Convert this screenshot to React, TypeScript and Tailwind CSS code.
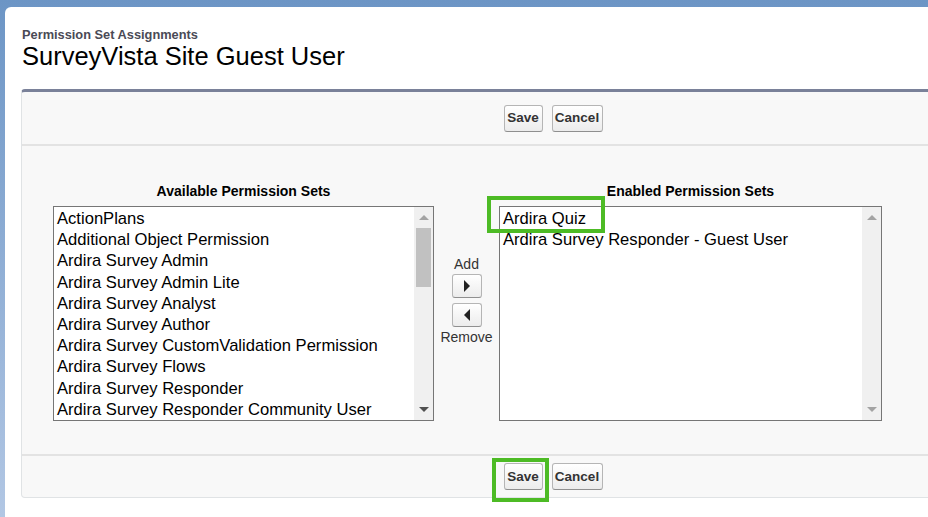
import React from "react";

const available = [
  "ActionPlans",
  "Additional Object Permission",
  "Ardira Survey Admin",
  "Ardira Survey Admin Lite",
  "Ardira Survey Analyst",
  "Ardira Survey Author",
  "Ardira Survey CustomValidation Permission",
  "Ardira Survey Flows",
  "Ardira Survey Responder",
  "Ardira Survey Responder Community User",
];

const enabled = ["Ardira Quiz", "Ardira Survey Responder - Guest User"];

function Btn({ label, w }: { label: string; w: string }) {
  return (
    <button
      className={`${w} h-[27px] rounded-[3px] border border-[#b5b5b5] border-b-[#8f8f8f] bg-gradient-to-b from-[#ffffff] to-[#ececec] text-[13.5px] font-bold text-[#333] leading-none`}
    >
      {label}
    </button>
  );
}

function ArrowUp({ color }: { color: string }) {
  return (
    <div
      className={`w-0 h-0 border-l-[5px] border-r-[5px] border-b-[5px] border-l-transparent border-r-transparent ${color}`}
    />
  );
}

function ArrowDown({ color }: { color: string }) {
  return (
    <div
      className={`w-0 h-0 border-l-[5px] border-r-[5px] border-t-[5px] border-l-transparent border-r-transparent ${color}`}
    />
  );
}

function ListBox({
  items,
  width,
  thumb,
}: {
  items: string[];
  width: string;
  thumb: boolean;
}) {
  return (
    <div
      className={`${width} h-[215px] bg-white border border-[#767676] flex`}
    >
      <ul className="flex-1 pl-[3px] pt-[1px] text-[16.6px] leading-[21.2px] text-black whitespace-nowrap overflow-hidden">
        {items.map((it) => (
          <li key={it}>{it}</li>
        ))}
      </ul>
      {/* fake scrollbar */}
      <div className="w-[19px] h-full bg-[#f0f0f0] flex flex-col items-center">
        <div className="h-[21px] flex items-center justify-center">
          <ArrowUp color="border-b-[#a3a3a3]" />
        </div>
        <div className="flex-1 w-full px-[2px]">
          {thumb && <div className="w-full h-[59px] bg-[#c1c1c1]" />}
        </div>
        <div className="h-[21px] flex items-center justify-center">
          <ArrowDown
            color={thumb ? "border-t-[#505050]" : "border-t-[#a3a3a3]"}
          />
        </div>
      </div>
    </div>
  );
}

function MoveBtn({ dir }: { dir: "right" | "left" }) {
  return (
    <button className="w-[30px] h-[24px] rounded-[3px] border border-[#b5b5b5] border-b-[#8f8f8f] bg-gradient-to-b from-[#ffffff] to-[#ececec] flex items-center justify-center">
      {dir === "right" ? (
        <div className="w-0 h-0 border-t-[6px] border-b-[6px] border-l-[6px] border-t-transparent border-b-transparent border-l-[#222]" />
      ) : (
        <div className="w-0 h-0 border-t-[6px] border-b-[6px] border-r-[6px] border-t-transparent border-b-transparent border-r-[#222]" />
      )}
    </button>
  );
}

export default function App() {
  return (
    <div
      className="relative w-[928px] h-[517px] overflow-hidden bg-gradient-to-b from-[#6c95c5] to-[#b2c7e4] pt-[7px] pl-[5px]"
      style={{ fontFamily: '"Liberation Sans", Arial, sans-serif' }}
    >
      <div className="w-[1100px] h-full bg-white rounded-tl-[6px] pl-[16px] pt-[20px]">
        {/* Page title */}
        <div className="pl-[1px]">
          <div className="text-[12.8px] font-bold text-[#4a4a56] leading-[15px]">
            Permission Set Assignments
          </div>
          <h1 className="text-[25.5px] text-black leading-[29px]">
            SurveyVista Site Guest User
          </h1>
        </div>

        {/* Panel */}
        <div className="mt-[18px] w-[1064px] bg-[#f8f8f8] border border-[#e0e3e5] border-t-[3px] border-t-[#7a8199] rounded-[4px]">
          {/* Top buttons */}
          <div className="h-[54px] flex items-center justify-center gap-[9px] border-b-2 border-[#e3e3e3]">
            <Btn label="Save" w="w-[39px]" />
            <Btn label="Cancel" w="w-[51px]" />
          </div>

          {/* Body */}
          <div className="h-[308px] pl-[31px] pt-[37px] flex">
            <div className="flex flex-col items-center">
              <div className="h-[17px] mb-[6px] text-[14px] font-bold text-black leading-[17px]">
                Available Permission Sets
              </div>
              <ListBox items={available} width="w-[381px]" thumb />
            </div>

            <div className="w-[65px] pt-[73px] flex flex-col items-center text-[14px] text-[#333] leading-[16px]">
              <span>Add</span>
              <div className="mt-[2px]">
                <MoveBtn dir="right" />
              </div>
              <div className="mt-[5px]">
                <MoveBtn dir="left" />
              </div>
              <span className="mt-[2px]">Remove</span>
            </div>

            <div className="flex flex-col items-center">
              <div className="h-[17px] mb-[6px] text-[14px] font-bold text-black leading-[17px]">
                Enabled Permission Sets
              </div>
              <ListBox items={enabled} width="w-[383px]" thumb={false} />
            </div>
          </div>

          {/* Bottom buttons */}
          <div className="h-[43px] flex items-center justify-center gap-[9px] border-t-2 border-[#e3e3e3]">
            <Btn label="Save" w="w-[39px]" />
            <Btn label="Cancel" w="w-[51px]" />
          </div>
        </div>
      </div>

      {/* highlight annotations */}
      <div className="absolute left-[487px] top-[196px] w-[118px] h-[37px] border-4 border-[#4dbb25]" />
      <div className="absolute left-[492px] top-[458px] w-[57px] h-[44px] border-4 border-[#4dbb25]" />
    </div>
  );
}
